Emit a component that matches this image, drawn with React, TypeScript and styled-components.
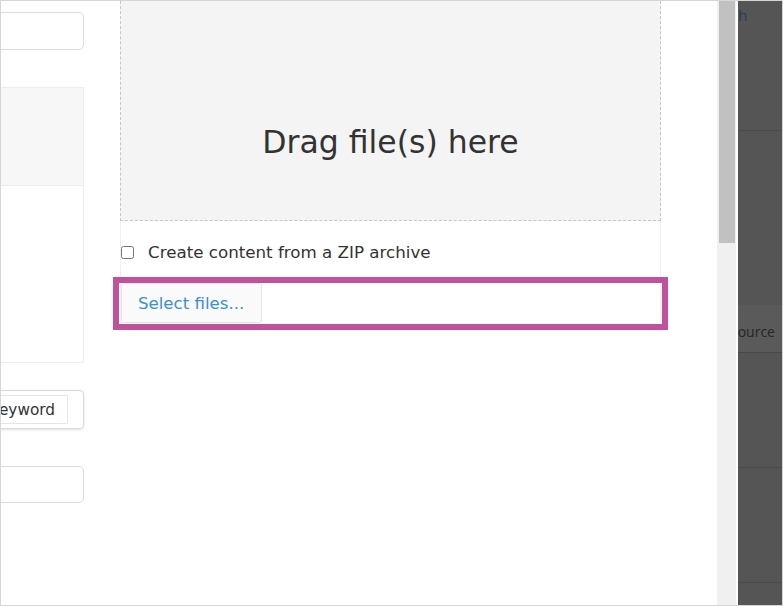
import React from "react";
import styled, { createGlobalStyle } from "styled-components";

const Global = createGlobalStyle`
  html, body { margin: 0; padding: 0; background: #fff; }
  * { box-sizing: border-box; }
`;

const Root = styled.div`
  position: relative;
  width: 783px;
  height: 606px;
  border: 1px solid #d6d6d6;
  display: flex;
  overflow: hidden;
  background: #fff;
  font-family: "DejaVu Sans", Verdana, sans-serif;
`;

const LeftPane = styled.div`
  width: 119px;
  flex: none;
  display: flex;
  flex-direction: column;
  align-items: flex-end;
  padding-right: 36px;
  overflow: hidden;
`;

const TextField = styled.div<{ $top: number; $h: number }>`
  flex: none;
  width: 300px;
  margin-top: ${(p) => p.$top}px;
  height: ${(p) => p.$h}px;
  border: 1px solid #dcdcdc;
  border-radius: 5px;
  background: #fff;
`;

const Panel = styled.div`
  flex: none;
  width: 300px;
  margin-top: 37px;
  height: 276px;
  border: 1px solid #ececec;
  display: flex;
  flex-direction: column;
`;

const PanelHeader = styled.div`
  height: 98px;
  background: #f7f7f7;
  border-bottom: 1px solid #ececec;
`;

const SearchGroup = styled.div`
  flex: none;
  width: 300px;
  margin-top: 27px;
  height: 39px;
  border: 1px solid #d9d9d9;
  border-radius: 4px;
  box-shadow: 0 1px 3px rgba(0, 0, 0, 0.12);
  display: flex;
  justify-content: flex-end;
  align-items: center;
  padding-right: 15px;
`;

const KeywordButton = styled.div`
  height: 29px;
  border: 1px solid #e6e6e6;
  padding: 0 12px;
  display: flex;
  align-items: center;
  font-size: 15.3px;
  color: #333;
  background: #fff;
  white-space: nowrap;
`;

const Uploader = styled.div`
  width: 541px;
  flex: none;
  display: flex;
  flex-direction: column;
`;

const DropZone = styled.div`
  height: 220px;
  background: #f4f4f4;
  border: 1px dashed #c6c6c6;
  border-top: none;
  display: flex;
  justify-content: center;
  align-items: center;
  padding-top: 62px;
  font-size: 31.5px;
  color: #333;
`;

const UploaderBody = styled.div`
  border-left: 1px solid #efefef;
  border-right: 1px solid #efefef;
  padding-bottom: 3px;
  display: flex;
  flex-direction: column;
  align-items: flex-start;
`;

const CheckRow = styled.label`
  margin-top: 22px;
  height: 18px;
  display: flex;
  align-items: center;
  gap: 14px;
  font-size: 16.7px;
  color: #333;
`;

const Check = styled.input`
  margin: 0;
  width: 13px;
  height: 13px;
`;

const SelectButton = styled.button`
  margin-top: 22px;
  height: 40px;
  width: 141px;
  border: 1px solid #e3e3e3;
  border-radius: 3px;
  background: #fafafa;
  color: #3a8ed6;
  font-family: inherit;
  font-size: 16.6px;
  text-align: left;
  padding: 0 0 0 16px;
`;

const WhiteGap = styled.div<{ $w: number }>`
  width: ${(p) => p.$w}px;
  flex: none;
  background: #fff;
`;

const ScrollTrack = styled.div`
  width: 19px;
  flex: none;
  background: #f0f0f0;
  padding-left: 2px;
`;

const ScrollThumb = styled.div`
  width: 16px;
  height: 242px;
  background: #c1c1c1;
`;

const DarkPanel = styled.div`
  flex: 1;
  background: #555555;
  display: flex;
  flex-direction: column;
  overflow: hidden;
  font-family: "Open Sans", "DejaVu Sans", sans-serif;
`;

const DarkTop = styled.div`
  height: 130px;
  border-bottom: 1px solid #4a4a4a;
  padding-top: 4px;
  line-height: 20px;
  font-size: 15px;
  color: #243d58;
  white-space: nowrap;
`;

const Clipped = styled.span<{ $shift: number }>`
  display: inline-block;
  margin-left: ${(p) => -p.$shift}px;
`;

const DarkSpacer = styled.div`
  height: 174px;
`;

const DarkHeader = styled.div`
  height: 48px;
  background: #5a5a5a;
  border-bottom: 1px solid #4a4a4a;
  display: flex;
  align-items: center;
  padding-top: 5px;
  font-size: 14px;
  color: #262626;
  white-space: nowrap;
`;

const DarkRow = styled.div`
  height: 115px;
  border-bottom: 1px solid #4a4a4a;
`;

const Highlight = styled.div`
  position: absolute;
  left: 112px;
  top: 276px;
  width: 555px;
  height: 53px;
  border: 6px solid #c0519d;
  pointer-events: none;
`;

export default function App() {
  return (
    <>
      <Global />
      <Root>
        <LeftPane>
          <TextField $top={11} $h={38} />
          <Panel>
            <PanelHeader />
          </Panel>
          <SearchGroup>
            <KeywordButton>Keyword</KeywordButton>
          </SearchGroup>
          <TextField $top={37} $h={37} />
        </LeftPane>
        <Uploader>
          <DropZone>Drag file(s) here</DropZone>
          <UploaderBody>
            <CheckRow>
              <Check type="checkbox" />
              Create content from a ZIP archive
            </CheckRow>
            <SelectButton type="button">Select files...</SelectButton>
          </UploaderBody>
        </Uploader>
        <WhiteGap $w={56} />
        <ScrollTrack>
          <ScrollThumb />
        </ScrollTrack>
        <WhiteGap $w={2} />
        <DarkPanel>
          <DarkTop>
            <Clipped $shift={38}>Search</Clipped>
          </DarkTop>
          <DarkSpacer />
          <DarkHeader>
            <Clipped $shift={8}>Source</Clipped>
          </DarkHeader>
          <DarkRow />
          <DarkRow />
        </DarkPanel>
        <Highlight />
      </Root>
    </>
  );
}
